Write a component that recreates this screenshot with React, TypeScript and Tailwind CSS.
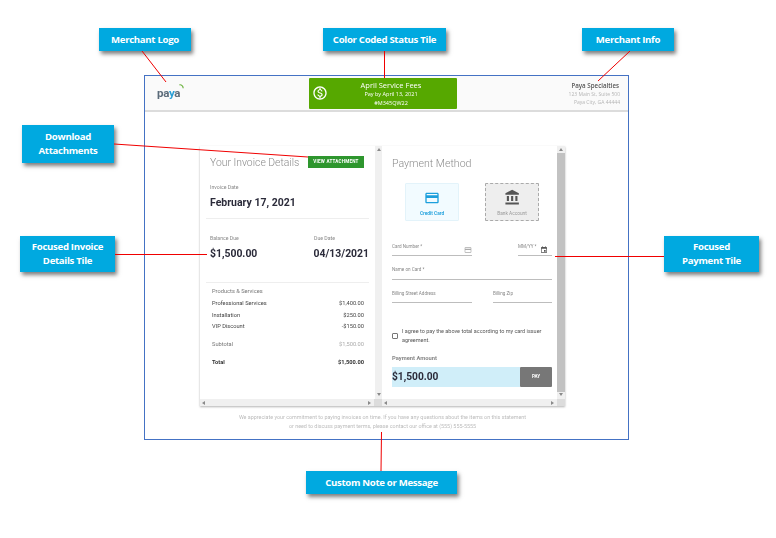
const callout =
    "absolute z-10 flex items-center justify-center bg-[#00a9e0] text-center text-[9.6px] leading-[14px] font-bold tracking-[-0.3px] text-white shadow-[2px_3px_4px_rgba(0,0,0,0.5)] [font-family:'Open_Sans',sans-serif]";

const ScrollArrow = ({ dir }: { dir: "up" | "down" | "left" | "right" }) => {
    const points = {
        up: "0,3 2,0 4,3",
        down: "0,0 2,3 4,0",
        left: "3,0 0,2 3,4",
        right: "0,0 3,2 0,4",
    }[dir];
    return (
        <svg width="4" height="4" viewBox="0 0 4 4" className="shrink-0">
            <polygon points={points} fill="#8a8a8a" />
        </svg>
    );
};

const VScroll = ({ thumb, width }: { thumb?: boolean; width: string }) => (
    <div className={`flex shrink-0 flex-col items-center bg-[#f0f0f0] py-[2px] ${width}`}>
        <ScrollArrow dir="up" />
        {thumb ? <div className="my-[1px] w-full flex-1 bg-[#c2c2c2]" /> : <div className="flex-1" />}
        <ScrollArrow dir="down" />
    </div>
);

const HScroll = () => (
    <div className="flex h-[7px] shrink-0 items-center">
        <div className="flex flex-1 items-center justify-between self-stretch bg-[#f0f0f0] px-[2px]">
            <ScrollArrow dir="left" />
            <ScrollArrow dir="right" />
        </div>
        <div className="h-full w-[8px] bg-[#dcdcdc]" />
    </div>
);

const MaterialIcon = ({ d, className }: { d: string; className: string }) => (
    <svg viewBox="0 0 24 24" fill="currentColor" className={className}>
        <path d={d} />
    </svg>
);

const cardPath =
    "M20 4H4c-1.11 0-1.99.89-1.99 2L2 18c0 1.11.89 2 2 2h16c1.11 0 2-.89 2-2V6c0-1.11-.89-2-2-2zm0 14H4v-6h16v6zm0-10H4V6h16v2z";
const bankPath = "M4 10v7h3v-7H4zm6 0v7h3v-7h-3zM2 22h19v-3H2v3zm14-12v7h3v-7h-3zm-4.5-9L2 6v2h19V6l-9.5-5z";
const calendarPath =
    "M17 12h-5v5h5v-5zM16 1v2H8V1H6v2H5c-1.11 0-1.99.9-1.99 2L3 19c0 1.1.89 2 2 2h14c1.1 0 2-.9 2-2V5c0-1.1-.9-2-2-2h-1V1h-2zm3 18H5V8h14v11z";
const dollarPath =
    "M12 2C6.48 2 2 6.48 2 12s4.48 10 10 10 10-4.48 10-10S17.52 2 12 2zm0 18c-4.41 0-8-3.59-8-8s3.59-8 8-8 8 3.59 8 8-3.59 8-8 8zm.31-8.86c-1.77-.45-2.34-.94-2.34-1.67 0-.84.79-1.43 2.1-1.43 1.38 0 1.9.66 1.94 1.64h1.71c-.05-1.34-.87-2.57-2.49-2.97V5H10.9v1.69c-1.51.32-2.72 1.3-2.72 2.81 0 1.79 1.49 2.69 3.66 3.21 1.95.46 2.34 1.15 2.34 1.87 0 .53-.39 1.39-2.1 1.39-1.6 0-2.23-.72-2.32-1.64H8.04c.1 1.7 1.36 2.66 2.86 2.97V19h2.34v-1.67c1.52-.29 2.72-1.16 2.73-2.77-.01-2.2-1.9-2.96-3.66-3.42z";

const LineItem = ({ name, amount, className }: { name: string; amount: string; className: string }) => (
    <div className={`flex items-center justify-between pr-[5px] pl-[2px] text-[5.7px] ${className}`}>
        <span>{name}</span>
        <span>{amount}</span>
    </div>
);

const Field = ({ label, width, height, icon }: { label: string; width: string; height: string; icon?: React.ReactNode }) => (
    <div className={width}>
        <div className="flex h-[8px] items-center text-[4.6px] text-[#888]">{label}</div>
        <div className={`relative border-b border-[#bdbdbd] ${height}`}>{icon}</div>
    </div>
);

export default function App() {
    return (
        <div className="relative h-[538px] w-[776px] overflow-hidden bg-white [font-family:Roboto,sans-serif]">
            {/* Annotation callouts */}
            <div className={`${callout} top-[28px] left-[99px] h-[23px] w-[92px]`}>Merchant Logo</div>
            <div className={`${callout} top-[28px] left-[323px] h-[23px] w-[123px]`}>Color Coded Status Tile</div>
            <div className={`${callout} top-[28px] left-[582px] h-[23px] w-[92px]`}>Merchant Info</div>
            <div className={`${callout} top-[125px] left-[22px] h-[38px] w-[92px]`}>
                Download
                <br />
                Attachments
            </div>
            <div className={`${callout} top-[236px] left-[20px] h-[36px] w-[95px]`}>
                Focused Invoice
                <br />
                Details Tile
            </div>
            <div className={`${callout} top-[236px] left-[664px] h-[36px] w-[95px]`}>
                Focused
                <br />
                Payment Tile
            </div>
            <div className={`${callout} top-[471px] left-[306px] h-[23px] w-[151px]`}>Custom Note or Message</div>

            {/* Red leader lines */}
            <svg className="absolute top-0 left-0 z-20" width="776" height="538">
                <g stroke="#f00000" strokeWidth="1" fill="none">
                    <line x1="142" y1="51" x2="166" y2="82" />
                    <line x1="384.5" y1="51" x2="384.5" y2="78" />
                    <line x1="630" y1="51" x2="598" y2="81" />
                    <line x1="114" y1="144" x2="308" y2="157" />
                    <line x1="115" y1="254.5" x2="207" y2="254.5" />
                    <line x1="555" y1="256.5" x2="664" y2="256.5" />
                    <line x1="381.5" y1="432" x2="381" y2="471" />
                </g>
            </svg>

            {/* Invoice page */}
            <div className="mt-[75px] ml-[144px] h-[365px] w-[485px] border border-[#4472c4]">
                <div className="blur-[0.35px]">
                    <div className="flex h-[36px] items-center border-b-2 border-[#dcdcdc] bg-[#fafafa]">
                        <div className="relative -mt-[3px] w-[164px] shrink-0 pl-[12px]">
                            <span className="text-[11.5px] font-bold tracking-[-0.3px] text-[#5b6b7a]">
                                pa<span className="text-[#2a9fd6]">y</span>a
                            </span>
                            <svg className="absolute top-[4px] left-[34px]" width="5" height="5" viewBox="0 0 6 6" fill="none">
                                <path d="M0.5 1 C3 0.5 5 2.5 5 5" stroke="#6cb33f" strokeWidth="1.4" />
                            </svg>
                        </div>
                        <div className="flex h-[31px] w-[148px] shrink-0 items-center rounded-[1px] bg-[#56a800] text-white">
                            <MaterialIcon d={dollarPath} className="ml-[3px] h-[16px] w-[16px]" />
                            <div className="flex-1 pr-[3px] text-center [font-family:'Open_Sans',sans-serif]">
                                <div className="text-[7.5px] leading-[10px]">April Service Fees</div>
                                <div className="text-[5.5px] leading-[9px]">Pay by April 13, 2021</div>
                                <div className="text-[5.5px] leading-[8px]">#M345QW22</div>
                            </div>
                        </div>
                        <div className="flex-1 pr-[8px] text-right [font-family:'Open_Sans',sans-serif]">
                            <div className="pr-[1px] text-[6.2px] leading-[9px] font-semibold text-[#555]">Paya Specialties</div>
                            <div className="text-[5px] leading-[8px] text-[#b5b5b5]">123 Main St, Suite 500</div>
                            <div className="text-[5px] leading-[8px] text-[#b5b5b5]">Paya City, GA 44444</div>
                        </div>
                    </div>

                    <div className="mt-[34px] ml-[55px] w-[365px]">
                        <div className="flex h-[260px] shadow-[0_1px_2px_rgba(0,0,0,0.3)]">
                            {/* Invoice details tile */}
                            <div className="flex w-[182px] flex-col">
                                <div className="flex min-h-0 flex-1">
                                    <div className="min-w-0 flex-1 pr-[6px] pl-[10px] text-[#2b2b3a]">
                                        <div className="mt-[10px] flex h-[12px] items-center justify-between pr-[5px]">
                                            <span className="pt-[2px] text-[10.4px] font-light whitespace-nowrap text-[#8c8c8c]">Your Invoice Details</span>
                                            <span className="flex h-[12px] w-[56px] items-center justify-center bg-[#2e962e] text-[4.6px] font-bold tracking-[0.2px] whitespace-nowrap text-white">
                                                VIEW ATTACHMENT
                                            </span>
                                        </div>
                                        <div className="mt-[16px] flex h-[8px] items-center text-[5.2px] text-[#888]">Invoice Date</div>
                                        <div className="mt-[4px] flex h-[14px] items-center text-[10.5px] font-bold">February 17, 2021</div>
                                        <div className="mt-[8px] -ml-[4px] border-t border-[#eeeeee]" />
                                        <div className="mt-[16px] flex h-[8px] items-center text-[5.2px] text-[#888]">
                                            <span className="w-[104px]">Balance Due</span>
                                            <span>Due Date</span>
                                        </div>
                                        <div className="mt-[4px] flex h-[14px] items-center text-[10.4px] font-bold whitespace-nowrap">
                                            <span className="w-[104px]">$1,500.00</span>
                                            <span>04/13/2021</span>
                                        </div>
                                        <div className="mt-[21px] -ml-[4px] border-t border-[#eeeeee]" />
                                        <div className="mt-[4px] flex h-[8px] items-center pl-[2px] text-[5.7px] text-[#777]">Products &amp; Services</div>
                                        <LineItem name="Professional Services" amount="$1,400.00" className="mt-[2px] h-[12px] text-[#444]" />
                                        <LineItem name="Installation" amount="$250.00" className="h-[12px] text-[#444]" />
                                        <LineItem name="VIP Discount" amount="-$150.00" className="h-[11px] text-[#444]" />
                                        <div className="mt-[6px] flex h-[12px] items-center justify-between pr-[5px] pl-[2px] text-[5.7px] text-[#777]">
                                            <span>Subtotal</span>
                                            <span className="text-[#aaa]">$1,500.00</span>
                                        </div>
                                        <LineItem name="Total" amount="$1,500.00" className="mt-[6px] h-[12px] font-bold text-[#333]" />
                                    </div>
                                    <VScroll width="w-[7px]" />
                                </div>
                                <HScroll />
                            </div>

                            {/* Payment tile */}
                            <div className="flex w-[183px] flex-col">
                                <div className="flex min-h-0 flex-1">
                                    <div className="min-w-0 flex-1 pr-[5px] pl-[10px]">
                                        <div className="mt-[11px] flex h-[14px] items-center text-[10.6px] font-light text-[#8c8c8c]">Payment Method</div>
                                        <div className="mt-[12px] ml-[13px] flex gap-[26px]">
                                            <div className="flex h-[38px] w-[54px] flex-col items-center rounded-[1px] border border-[#e3f3fa] bg-[#f2fbff] pt-[6px] text-[#1c9fdc]">
                                                <MaterialIcon d={cardPath} className="h-[16px] w-[16px]" />
                                                <span className="mt-[4px] text-[4.8px] font-semibold">Credit Card</span>
                                            </div>
                                            <div className="flex h-[38px] w-[54px] flex-col items-center rounded-[1px] border border-dashed border-[#aaaaaa] bg-[#eeeeee] pt-[5px] text-[#555]">
                                                <MaterialIcon d={bankPath} className="h-[17px] w-[17px]" />
                                                <span className="mt-[4px] text-[4.8px] text-[#999]">Bank Account</span>
                                            </div>
                                        </div>
                                        <div className="mt-[22px] flex gap-[46px]">
                                            <Field
                                                label="Card Number *"
                                                width="w-[80px]"
                                                height="h-[5px]"
                                                icon={<MaterialIcon d={cardPath} className="absolute -top-[5px] right-0 h-[8px] w-[8px] text-[#aaa]" />}
                                            />
                                            <Field
                                                label="MM/YY *"
                                                width="w-[34px]"
                                                height="h-[5px]"
                                                icon={<MaterialIcon d={calendarPath} className="absolute -top-[5px] right-[4px] h-[8px] w-[8px] text-[#555]" />}
                                            />
                                        </div>
                                        <div className="mt-[10px]">
                                            <Field label="Name on Card *" width="w-full" height="h-[6px]" />
                                        </div>
                                        <div className="mt-[10px] flex gap-[21px]">
                                            <Field label="Billing Street Address" width="w-[80px]" height="h-[5px]" />
                                            <Field label="Billing Zip" width="w-[59px]" height="h-[5px]" />
                                        </div>
                                        <div className="mt-[24px] flex h-[18px] items-center gap-[4px]">
                                            <div className="h-[6px] w-[6px] shrink-0 rounded-[1px] border border-[#777]" />
                                            <div className="text-[5.5px] leading-[9px] text-[#555]">
                                                I agree to pay the above total according to my card issuer agreement.
                                            </div>
                                        </div>
                                        <div className="mt-[9px] flex h-[8px] items-center text-[5.8px] font-bold text-[#888]">Payment Amount</div>
                                        <div className="mt-[5px] flex h-[20px]">
                                            <div className="flex flex-1 items-center bg-[#d0eef9] text-[10.2px] font-bold text-[#2b2b3a]">$1,500.00</div>
                                            <div className="flex w-[32px] items-center justify-center rounded-[1px] bg-[#777777] text-[4.6px] font-bold text-white">PAY</div>
                                        </div>
                                    </div>
                                    <VScroll thumb width="w-[8px]" />
                                </div>
                                <HScroll />
                            </div>
                        </div>
                        <div className="mt-[7px] text-center text-[5.4px] leading-[9px] text-[#bcbcbc]">
                            We appreciate your commitment to paying invoices on time. If you have any questions about the items on this statement
                            <br />
                            or need to discuss payment terms, please contact our office at (555) 555-5555
                        </div>
                    </div>
                </div>
            </div>
        </div>
    );
}
